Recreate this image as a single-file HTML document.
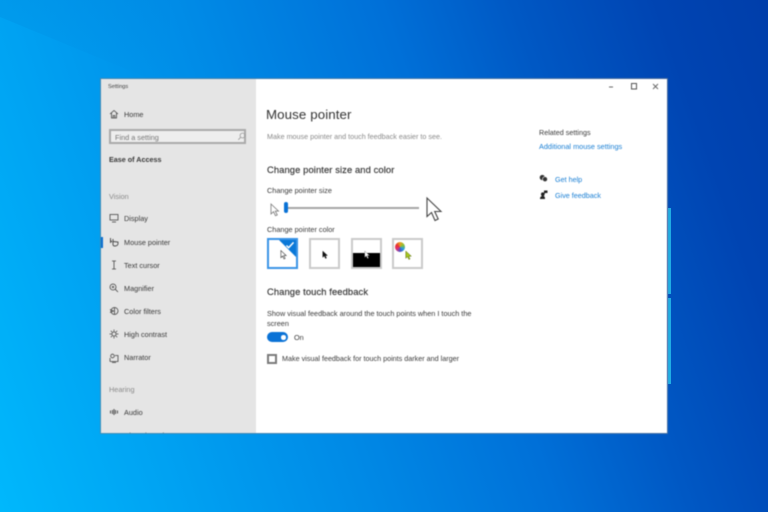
<!DOCTYPE html>
<html><head><meta charset="utf-8"><style>
html,body{margin:0;padding:0}
body{width:768px;height:512px;overflow:hidden;position:relative;font-family:"Liberation Sans",sans-serif;background:#0070d8}
.bg,.bg svg{position:absolute;left:0;top:0;width:768px;height:512px}
.win{position:absolute;left:101px;top:79px;width:566px;height:354px;background:#fff;box-shadow:0 0 0 1px rgba(110,125,140,.6);overflow:hidden;filter:blur(.4px)}
.side{position:absolute;left:0;top:0;width:155px;height:354px;background:#e5e5e5}
.t{position:absolute;white-space:nowrap;color:#3a3a3a;font-size:7.3px;line-height:10px}
.g{color:#8b8b8b}.l{color:#1a7fd4}
.h{font-size:9.4px;color:#333;line-height:12px;letter-spacing:.1px;-webkit-text-stroke:.15px #333}
svg.i{position:absolute;overflow:visible;fill:none;stroke:#444;stroke-width:1}
.sw{position:absolute;top:159px;width:31px;height:31px;box-sizing:border-box;border:2px solid #cacaca;background:#fff;overflow:hidden}
.acc{position:absolute;left:668px;width:3px;background:#28c4ee;opacity:.8}
</style></head><body>
<div class="bg"><svg viewBox="0 0 768 512">
<defs>
<linearGradient id="a" gradientUnits="userSpaceOnUse" x1="-160" y1="56" x2="683" y2="-240">
<stop offset="0" stop-color="#00b8fc"/><stop offset=".19" stop-color="#00a2f2"/><stop offset=".39" stop-color="#008ae6"/><stop offset=".59" stop-color="#0070d8"/><stop offset=".73" stop-color="#0058c4"/><stop offset=".883" stop-color="#0044b2"/><stop offset="1" stop-color="#003eaa"/>
</linearGradient>
<linearGradient id="c" x1="0" y1="0" x2="1" y2="1"><stop offset="0" stop-color="#0080d8" stop-opacity=".25"/><stop offset="1" stop-color="#0080d8" stop-opacity="0"/></linearGradient>
</defs>
<rect width="768" height="512" fill="url(#a)"/>
<polygon points="0,0 170,0 170,79 150,79 0,17" fill="url(#c)"/>
</svg></div>
<div class="acc" style="top:208px;height:86px"></div>
<div class="acc" style="top:298px;height:86px"></div>
<div class="win">
<div class="side"></div>
<div class="t" style="left:7px;top:3px;font-size:5.6px;color:#444">Settings</div>
<svg class="i" style="left:8px;top:30px" width="10" height="10" viewBox="0 0 10 10"><path d="M1 5 5 1.500 9 5M2.500 4v5h5V4M4.200 9V6.500h1.600V9" stroke-width=".8"/></svg>
<div class="t" style="left:23px;top:31px">Home</div>
<div style="position:absolute;left:8px;top:50px;width:137px;height:15px;box-sizing:border-box;border:2px solid #aaaaaa;background:#eeeeee"></div>
<div class="t g" style="left:14px;top:54px;color:#777">Find a setting</div>
<svg class="i" style="left:136px;top:53px" width="9" height="9" viewBox="0 0 9 9"><circle cx="5.500" cy="3.500" r="2.400" stroke="#999" stroke-width=".8"/><path d="M3.700 5.200 1.300 7.800" stroke="#999" stroke-width=".8"/></svg>
<div class="t" style="left:8px;top:76px;font-weight:bold;font-size:7.200px">Ease of Access</div>
<div class="t g" style="left:8px;top:113px">Vision</div>
<svg class="i" style="left:8px;top:134px" width="10" height="10" viewBox="0 0 10 10"><rect x="1" y="1.500" width="8" height="5.500" stroke-width=".8"/><path d="M3 9h4" stroke-width=".8"/></svg>
<div class="t" style="left:23px;top:135px">Display</div>
<div style="position:absolute;left:0;top:158px;width:2px;height:11px;background:#0a6fd0"></div>
<svg class="i" style="left:8px;top:158px" width="10" height="10" viewBox="0 0 10 10"><path d="M1.500 1v5M1.500 3.500 3 5M4 2v5.500c0 1 1 1.500 2 1.500s3-.5 3-2.500V5L4 4.500" stroke-width=".9"/></svg>
<div class="t" style="left:23px;top:159px">Mouse pointer</div>
<svg class="i" style="left:8px;top:181px" width="10" height="10" viewBox="0 0 10 10"><path d="M3 1h4M5 1v8M3 9h4" stroke-width=".8"/></svg>
<div class="t" style="left:23px;top:182px">Text cursor</div>
<svg class="i" style="left:8px;top:204px" width="10" height="10" viewBox="0 0 10 10"><circle cx="4" cy="4" r="3" stroke-width=".8"/><path d="M6.200 6.200 9 9M2.700 4h2.600M4 2.700v2.600" stroke-width=".8"/></svg>
<div class="t" style="left:23px;top:205px">Magnifier</div>
<svg class="i" style="left:8px;top:227px" width="10" height="10" viewBox="0 0 10 10"><circle cx="5.500" cy="5" r="3.500" stroke-width=".8"/><path d="M1 3.500 4.500 5 1 6.500M5.500 1.500v7" stroke-width=".8"/></svg>
<div class="t" style="left:23px;top:228px">Color filters</div>
<svg class="i" style="left:8px;top:250px" width="10" height="10" viewBox="0 0 10 10"><circle cx="5" cy="5" r="2" stroke-width=".8"/><path d="M5 .5v2M5 7.500v2M.5 5h2M7.500 5h2M1.800 1.800l1.400 1.400M6.800 6.800l1.400 1.400M1.800 8.200l1.400-1.400M6.800 3.200l1.400-1.400" stroke-width=".7"/></svg>
<div class="t" style="left:23px;top:251px">High contrast</div>
<svg class="i" style="left:8px;top:274px" width="10" height="10" viewBox="0 0 10 10"><path d="M1 8.500h8V2.500H6M1 8.500V5M3 9.500h4" stroke-width=".8"/><circle cx="3.500" cy="3" r="1.800" stroke-width=".8"/></svg>
<div class="t" style="left:23px;top:274px">Narrator</div>
<div class="t g" style="left:8px;top:306px">Hearing</div>
<svg class="i" style="left:8px;top:328px" width="10" height="10" viewBox="0 0 10 10"><path d="M5 2v6M3.500 3v4M6.500 3v4M1.500 3.500v3M8.500 3.500v3" stroke-width=".9"/></svg>
<div class="t" style="left:23px;top:329px">Audio</div>
<div class="t" style="left:23px;top:352px">Closed captions</div>

<div class="t" style="left:165px;top:27px;font-size:13.300px;line-height:17px;color:#333;letter-spacing:.1px">Mouse pointer</div>
<div class="t g" style="left:166px;top:53px;font-size:7.200px;color:#8a8a8a">Make mouse pointer and touch feedback easier to see.</div>
<div class="t h" style="left:166px;top:85px">Change pointer size and color</div>
<div class="t" style="left:166px;top:107px">Change pointer size</div>
<svg class="i" style="left:169px;top:124px" width="10" height="14" viewBox="0 0 10 14"><path d="M1 1v10l2.500-2.300 2 4 1.800-.8-2-3.800H8.500z" stroke="#777" stroke-width=".8"/></svg>
<div style="position:absolute;left:186px;top:128px;width:132px;height:1.500px;background:#a5a5a5"></div>
<div style="position:absolute;left:183px;top:123px;width:3.500px;height:11px;border-radius:2px;background:#0a72d6"></div>
<svg class="i" style="left:325px;top:118px" width="17" height="25" viewBox="0 0 17 25"><path d="M1 1v18.500l4.500-4 3.500 8 3.200-1.500-3.500-7.500H15z" stroke="#444" stroke-width="1.100" fill="#fff"/></svg>
<div class="t" style="left:166px;top:146px">Change pointer color</div>
<div class="sw" style="left:166px;border-color:#3a94e6">
<div style="position:absolute;top:0;right:0;width:0;height:0;border-top:17px solid #0a78d8;border-left:17px solid transparent"></div>
<svg style="position:absolute;left:16px;top:1px" width="10" height="8" viewBox="0 0 11 9"><path d="M1.500 5 4 7.500 9.500 1.500" fill="none" stroke="#fff" stroke-width="1.600"/></svg>
<svg style="position:absolute;left:11px;top:9px" width="8" height="12" viewBox="0 0 9 12"><path d="M1 1v8l2-1.800 1.500 3.300 1.300-.6-1.500-3.200H7z" fill="#fff" stroke="#444" stroke-width=".7"/></svg>
</div>
<div class="sw" style="left:208px"><svg style="position:absolute;left:11px;top:10px" width="7" height="10" viewBox="0 0 9 12"><path d="M1 1v8l2-1.800 1.500 3.300 1.300-.6-1.500-3.200H7z" fill="#111" stroke="#111" stroke-width=".5"/></svg></div>
<div class="sw" style="left:250px"><div style="position:absolute;left:0;right:0;bottom:0;height:14px;background:#000"></div><svg style="position:absolute;left:11px;top:10px" width="7" height="10" viewBox="0 0 9 12"><path d="M1 1v8l2-1.800 1.500 3.300 1.300-.6-1.500-3.200H7z" fill="#fff" stroke="#666" stroke-width=".5"/></svg></div>
<div class="sw" style="left:291px">
<div style="position:absolute;left:1px;top:2px;width:10px;height:10px;border-radius:50%;background:conic-gradient(#e8a020,#8cc030,#28a0e0,#5050c8,#e03070,#e83030,#e8a020)"></div>
<svg style="position:absolute;left:11px;top:10px" width="8" height="11" viewBox="0 0 10 13"><path d="M1 1v9l2.200-2 1.600 3.500 1.500-.7L4.700 7.400H8z" fill="#a6c81e" stroke="#5a6a10" stroke-width=".6"/></svg>
</div>
<div class="t h" style="left:166px;top:207px">Change touch feedback</div>
<div class="t" style="left:166px;top:230px">Show visual feedback around the touch points when I touch the</div>
<div class="t" style="left:166px;top:240px">screen</div>
<div style="position:absolute;left:166px;top:253px;width:21px;height:10px;border-radius:6px;background:#0a72d6"></div>
<div style="position:absolute;left:180px;top:256px;width:4.500px;height:4.500px;border-radius:50%;background:#fff"></div>
<div class="t" style="left:193px;top:254px">On</div>
<div style="position:absolute;left:166px;top:275px;width:10px;height:10px;box-sizing:border-box;border:2px solid #7a7a7a"></div>
<div class="t" style="left:181px;top:275px;font-size:7.200px">Make visual feedback for touch points darker and larger</div>

<svg class="i" style="left:505px;top:2px" width="60" height="12" viewBox="0 0 60 12"><path d="M3 6h4" stroke="#666"/><rect x="25.500" y="2.500" width="5" height="5.500" stroke="#555"/><path d="M47 3l5 5M52 3l-5 5" stroke="#666" stroke-width=".9"/></svg>
<div class="t" style="left:438px;top:49px;font-size:7.200px">Related settings</div>
<div class="t l" style="left:438px;top:63px">Additional mouse settings</div>
<svg class="i" style="left:438px;top:95px" width="9" height="9" viewBox="0 0 9 9"><circle cx="3.300" cy="3.500" r="2.600" fill="#333" stroke="none"/><circle cx="6" cy="5.200" r="2.500" fill="#333" stroke="#fff" stroke-width=".6"/></svg>
<div class="t l" style="left:454px;top:96px;font-size:7.200px">Get help</div>
<svg class="i" style="left:438px;top:111px" width="9" height="9" viewBox="0 0 9 9"><circle cx="3.800" cy="4.200" r="1.800" fill="#222" stroke="none"/><path d="M1 9c0-2 1-3 2.800-3S6 7 6 9zM5 .5h3.500v2.500H6.500L5 4z" fill="#222" stroke="none"/></svg>
<div class="t l" style="left:454px;top:112px;font-size:7.200px">Give feedback</div>
</div>
</body></html>
